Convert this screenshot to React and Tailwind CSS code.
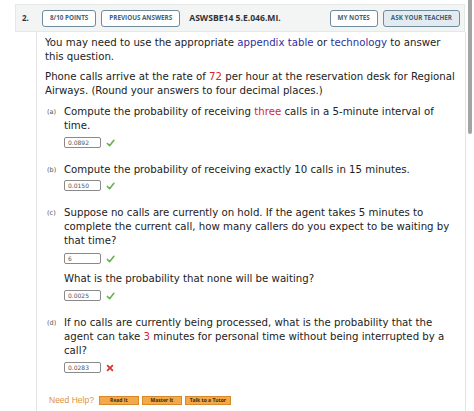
import React from 'react';

const body = { fontFamily: '"DejaVu Sans", Verdana, sans-serif' };
const head = { fontFamily: '"Open Sans", Arial, sans-serif' };

function HeadButton({ children, filled }) {
  return (
    <div
      className={`h-[17px] px-[7px] flex items-center rounded-[3px] border border-[#6e8c9c] text-[6.3px] font-bold text-[#3f6178] ${filled ? 'bg-[#e4ebf0]' : 'bg-white'}`}
    >
      {children}
    </div>
  );
}

function Answer({ value, wrong }) {
  return (
    <div className="flex items-center gap-[5px]">
      <div className="w-[37px] h-[11px] rounded-[2px] border border-[#8a8a8a] bg-white flex items-center pl-[3px] text-[6px] text-[#555]" style={body}>
        {value}
      </div>
      {wrong ? (
        <svg width="8" height="8" viewBox="0 0 10 10">
          <path d="M2 2 L8 8 M8 2 L2 8" stroke="#d9352e" strokeWidth="2.2" strokeLinecap="round" />
        </svg>
      ) : (
        <svg width="9" height="8" viewBox="0 0 10 9">
          <path d="M1.5 5 L4 7.5 L8.8 1.5" stroke="#6ab04c" strokeWidth="1.8" fill="none" strokeLinecap="round" strokeLinejoin="round" />
        </svg>
      )}
    </div>
  );
}

function Part({ label, children }) {
  return (
    <div className="flex">
      <div className="w-[19px] shrink-0 pl-[2px] text-[6.5px] text-[#555] leading-[14px]">({label})</div>
      <div className="flex-1">{children}</div>
    </div>
  );
}

function HelpButton({ children }) {
  return (
    <div className="h-[9px] flex items-center justify-center bg-[#f3a94a] border border-[#d88a2a] text-[5px] font-bold text-[#3a2a10]" style={head}>
      {children}
    </div>
  );
}

export default function App() {
  const red = 'text-[#d3262b]';
  const link = 'text-[#2f2f9e]';
  return (
    <div className="w-[474px] h-[411px] bg-white flex overflow-hidden">
      <div className="w-[466px] flex flex-col">
        {/* question header */}
        <div className="ml-[15px] mt-[4px] w-[450px] h-[28px] bg-[#f3f4f4] border border-[#e6e8e8] flex items-center pl-[6px] pr-[4px] gap-[5px]" style={head}>
          <div className="w-[15px] text-[8px] font-bold text-[#333]">2.</div>
          <HeadButton>8/10 POINTS</HeadButton>
          <HeadButton>PREVIOUS ANSWERS</HeadButton>
          <div className="ml-[4px] text-[8.6px] font-bold text-[#333]">ASWSBE14 5.E.046.MI.</div>
          <div className="flex-1" />
          <HeadButton>MY NOTES</HeadButton>
          <HeadButton filled>ASK YOUR TEACHER</HeadButton>
        </div>

        {/* question body */}
        <div className="ml-[36px] flex-1 border-l border-r border-[#e4e4e4] pl-[8px] pr-[8px] pt-[4px] text-[10.2px] leading-[14px] text-[#222]" style={body}>
          <p>
            You may need to use the appropriate <span className={link}>appendix table</span> or <span className={link}>technology</span> to answer this question.
          </p>
          <p className="mt-[6px]">
            Phone calls arrive at the rate of <span className={red}>72</span> per hour at the reservation desk for Regional Airways. (Round your answers to four decimal places.)
          </p>

          <div className="mt-[7px]">
            <Part label="a">
              <p>Compute the probability of receiving <span className={red}>three</span> calls in a 5-minute interval of time.</p>
              <div className="mt-[4px]"><Answer value="0.0892" /></div>
            </Part>
          </div>

          <div className="mt-[15px]">
            <Part label="b">
              <p>Compute the probability of receiving exactly 10 calls in 15 minutes.</p>
              <div className="mt-[3px]"><Answer value="0.0150" /></div>
            </Part>
          </div>

          <div className="mt-[15px]">
            <Part label="c">
              <p>Suppose no calls are currently on hold. If the agent takes 5 minutes to complete the current call, how many callers do you expect to be waiting by that time?</p>
              <div className="mt-[5px]"><Answer value="6" /></div>
              <p className="mt-[8px]">What is the probability that none will be waiting?</p>
              <div className="mt-[4px]"><Answer value="0.0025" /></div>
            </Part>
          </div>

          <div className="mt-[15px]">
            <Part label="d">
              <p>If no calls are currently being processed, what is the probability that the agent can take <span className={red}>3</span> minutes for personal time without being interrupted by a call?</p>
              <div className="mt-[4px]"><Answer value="0.0283" wrong /></div>
            </Part>
          </div>

          <div className="mt-[20px] pl-[4px] flex items-center gap-[3px]">
            <span className="text-[8.5px] text-[#e0913a] mr-[2px]" style={{ fontFamily: '"Liberation Sans", Arial, sans-serif' }}>Need Help?</span>
            <div className="w-[40px]"><HelpButton>Read It</HelpButton></div>
            <div className="w-[40px]"><HelpButton>Master It</HelpButton></div>
            <div className="w-[46px]"><HelpButton>Talk to a Tutor</HelpButton></div>
          </div>
        </div>
      </div>

      {/* scrollbar */}
      <div className="w-[8px] bg-white flex justify-center">
        <div className="w-[4px] h-[134px] rounded-b-[2px] bg-[#a3a3a3]" />
      </div>
    </div>
  );
}
